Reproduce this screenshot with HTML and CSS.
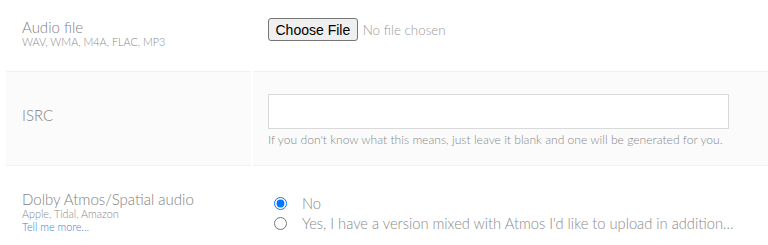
FILE: index.html
```html
<!DOCTYPE html>
<html>
<head>
<meta charset="utf-8">
<link rel="stylesheet" href="styles.css">
</head>
<body>
<div class="form">
  <div class="row">
    <div class="label-cell">
      <div class="label">Audio file</div>
      <div class="sub">WAV, WMA, M4A, FLAC, MP3</div>
    </div>
    <div class="field-cell file-cell">
      <button class="file-btn" type="button">Choose File</button>
      <span class="no-file">No file chosen</span>
    </div>
  </div>
  <div class="row shaded">
    <div class="label-cell center">
      <div class="label">ISRC</div>
    </div>
    <div class="field-cell isrc-cell">
      <input class="text-input" type="text">
      <div class="hint">If you don't know what this means, just leave it blank and one will be generated for you.</div>
    </div>
  </div>
  <div class="row last">
    <div class="label-cell">
      <div class="label">Dolby Atmos/Spatial audio</div>
      <div class="sub">Apple, Tidal, Amazon</div>
      <a class="more" href="#">Tell me more...</a>
    </div>
    <div class="field-cell radio-cell">
      <label class="opt"><input type="radio" name="atmos" checked><span>No</span></label>
      <label class="opt"><input type="radio" name="atmos"><span>Yes, I have a version mixed with Atmos I'd like to upload in addition...</span></label>
    </div>
  </div>
</div>
</body>
</html>
```

FILE: styles.css
```css
html, body {
  margin: 0;
  padding: 0;
  background: #ffffff;
}
body {
  font-family: Lato, "Liberation Sans", sans-serif;
  font-weight: 300;
  color: #888888;
  width: 768px;
  height: 245px;
  overflow: hidden;
}
.form {
  padding-left: 6px;
}
.row {
  display: grid;
  grid-template-columns: 245px 1fr;
  column-gap: 2px;
  height: 71px;
}
.row.shaded {
  height: 95px;
}
.row.shaded > div {
  background: #fbfbfb;
  border-top: 1px solid #edf3fa;
  border-bottom: 1px solid #edf3fa;
}
.row.last {
  height: 77px;
}
.label-cell {
  padding-left: 16px;
  box-sizing: border-box;
}
.row:first-child .label-cell {
  padding-top: 18px;
}
.label-cell.center {
  display: flex;
  align-items: center;
  padding-bottom: 8px;
}
.row.last .label-cell {
  padding-top: 24px;
}
.label {
  font-size: 15px;
  line-height: 18px;
  color: #828282;
}
.sub {
  font-size: 10.8px;
  line-height: 12px;
  color: #888888;
}
.more {
  display: block;
  font-size: 10.8px;
  line-height: 13px;
  color: #3d7ddb;
  text-decoration: none;
}
.field-cell {
  padding-left: 15px;
  box-sizing: border-box;
}
.file-cell {
  display: flex;
  align-items: center;
  padding-top: 0;
  padding-bottom: 12px;
}
.file-btn {
  font-family: Arial, "Liberation Sans", sans-serif;
  font-weight: 400;
  font-size: 14px;
  color: #000;
  background: #efefef;
  border: 1px solid #767676;
  border-radius: 3px;
  height: 23px;
  padding: 0 6.5px;
  margin: 0 5px 0 0;
}
.no-file {
  font-size: 13.4px;
  color: #9a9a9a;
}
.isrc-cell {
  padding-top: 22px;
}
.text-input {
  display: block;
  box-sizing: border-box;
  width: 461px;
  height: 35px;
  border: 1px solid #d9d9d9;
  background: #fff;
  margin: 0;
  padding: 0 8px;
}
.hint {
  font-size: 12.1px;
  line-height: 14px;
  margin-top: 4px;
  color: #888888;
}
.radio-cell {
  padding-top: 27px;
  padding-left: 18px;
}
.opt {
  display: flex;
  align-items: center;
  height: 20px;
  font-size: 14.7px;
  color: #8a8a8a;
}
.opt input {
  margin: 0 15px 0 3px;
  width: 13px;
  height: 13px;
}
```
